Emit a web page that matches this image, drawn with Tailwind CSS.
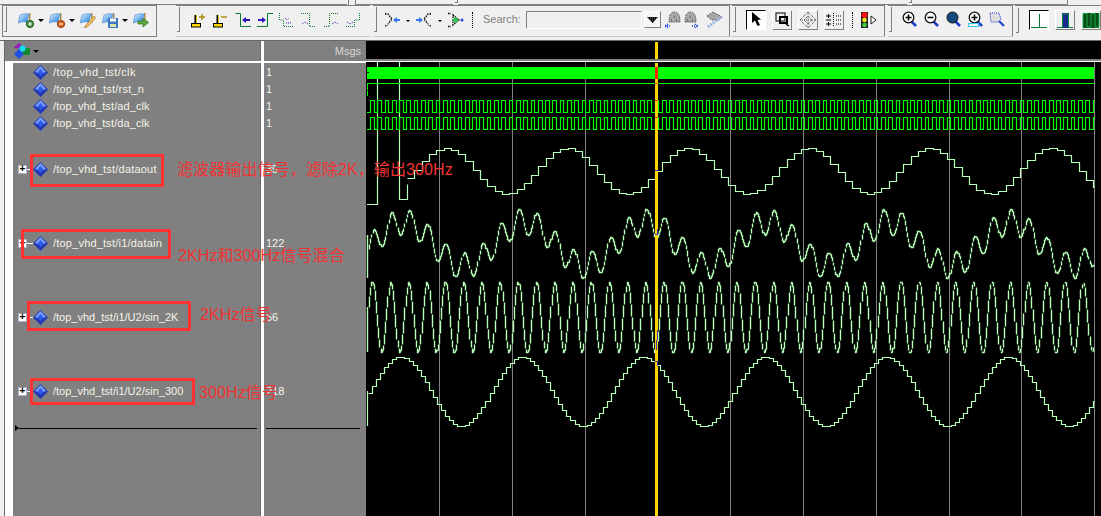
<!DOCTYPE html>
<html lang="zh">
<head>
    <meta charset="UTF-8">
    <title>Wave</title>
    <script src="https://cdn.jsdelivr.net/npm/@tailwindcss/browser@4"></script>
</head>
<body class="bg-[#f0f0f0] overflow-hidden">
<svg class="absolute w-0 h-0">
    <defs>
        <linearGradient id="fl" x1="0" y1="0" x2="1" y2="1"><stop offset="0" stop-color="#eaf6ff"/><stop offset="0.5" stop-color="#7ab8f0"/><stop offset="1" stop-color="#2a70d0"/></linearGradient>
        <symbol id="flag" viewBox="0 0 16 16"><path d="M2 3 Q6 1 11 2 L9 10 Q5 9 0 11Z" fill="url(#fl)" stroke="#3a7ac8" stroke-width="0.500"/><path d="M11 1 L12.500 1 L12.500 11 L11 11Z" fill="#a88c58"/></symbol>
        <symbol id="dia" viewBox="0 0 15 15"><path d="M7.500 0 15 7.500 7.500 15 0 7.500Z" fill="#2238b8"/><path d="M7.500 1 13 7 7.500 9 2 7Z" fill="#7aa0f8"/><path d="M7.500 4 10.500 7.500 7.500 11 4.500 7.500Z" fill="#2f5cf0"/></symbol>
        <symbol id="glass" viewBox="0 0 15 17"><path d="M9 10 14 15" stroke="#1d3fc8" stroke-width="2.600"/><circle cx="6.500" cy="6.500" r="5.300" fill="#fff" stroke="#111" stroke-width="1.300"/></symbol>
    </defs>
</svg>

<div class="relative w-[1101px] h-[516px] overflow-hidden font-['Liberation_Sans',sans-serif] text-[11px]">
    <!-- upper toolbar bottoms -->
    <div class="flex h-[5px]">
        <div class="w-[347px] h-[5px] border-b border-[#808080]"></div>
        <div class="w-[8px] ml-[1px] h-[5px] border-x border-[#808080]"></div>
        <div class="w-[97px] h-[5px] border-b border-[#808080]"></div>
        <div class="w-[3px] ml-[2px] h-[3px] border-r border-b border-[#808080]"></div>
        <div class="w-[449px] h-[5px] border-b border-[#808080]"></div>
        <div class="w-[3px] ml-[2px] h-[3px] border-r border-b border-[#808080]"></div>
        <div class="w-[156px] h-[5px] border-b border-r border-[#808080]"></div>
    </div>

    <!-- toolbars -->
    <div class="flex h-[32px] pl-[2px]">
        <div class="flex items-center shrink-0 w-[155px] pb-[3px] border border-[#808080]">
            <div class="ml-[1px] w-[3px] h-[25px] border-r border-b border-[#808080] shrink-0"></div>
            <svg class="ml-[11px] w-[16px] h-[16px] shrink-0" viewBox="0 0 16 16"><use href="#flag"/><circle cx="12" cy="12" r="3.600" fill="#3f8f3a" stroke="#24551f"/><path d="M10 12h4M12 10v4" stroke="#fff"/></svg>
            <span class="ml-[4px] w-0 h-0 border-x-[3px] border-t-[3px] border-x-transparent border-t-black mt-[1px] shrink-0"></span>
            <svg class="ml-[5px] w-[16px] h-[16px] shrink-0" viewBox="0 0 16 16"><use href="#flag"/><circle cx="12" cy="12" r="3.600" fill="#e0641e" stroke="#8c3b10"/><path d="M10 12h4" stroke="#fff"/></svg>
            <span class="ml-[4px] w-0 h-0 border-x-[3px] border-t-[3px] border-x-transparent border-t-black mt-[1px] shrink-0"></span>
            <svg class="ml-[5px] w-[16px] h-[16px] shrink-0" viewBox="0 0 16 16"><use href="#flag"/><path d="M14 4 6 13 4 16 8 14.500 15.500 6Z" fill="#f0c060" stroke="#a87a28" stroke-width="0.700"/></svg>
            <svg class="ml-[6px] w-[16px] h-[16px] shrink-0" viewBox="0 0 16 16"><use href="#flag"/><rect x="6" y="6" width="10" height="10" fill="#3d78c8"/><rect x="8" y="6.500" width="6" height="3" fill="#fff"/><rect x="8" y="12" width="6" height="3" fill="#d8e4a0"/></svg>
            <span class="ml-[4px] w-0 h-0 border-x-[3px] border-t-[3px] border-x-transparent border-t-black mt-[1px] shrink-0"></span>
            <svg class="ml-[5px] w-[16px] h-[16px] shrink-0" viewBox="0 0 16 16"><use href="#flag"/><path d="M5 9h5V6l5.500 4.500L10 15v-3H5Z" fill="#5fa83f" stroke="#386d28" stroke-width="0.700"/></svg>
        </div>
        <div class="flex items-center shrink-0 ml-[19px] w-[194px] pb-[3px] border-t border-b border-[#c8c8c8] border-t-[#808080]">
            <div class="ml-[1px] w-[3px] h-[25px] border-r border-b border-[#808080] shrink-0"></div>
            <svg class="ml-[11px] w-[15px] h-[16px] shrink-0" viewBox="0 0 15 16"><path d="M4.500 3v8" stroke="#000" stroke-width="2"/><path d="M5.500 3v8" stroke="#e8c000" stroke-width="1"/><rect x="0.500" y="11.500" width="9" height="3.500" fill="#ffd800" stroke="#000"/><path d="M8 5h6M11 2v6" stroke="#a88800" stroke-width="1.400"/></svg>
            <svg class="ml-[7px] w-[15px] h-[16px] shrink-0" viewBox="0 0 15 16"><path d="M4.500 3v8" stroke="#000" stroke-width="2"/><path d="M5.500 3v8" stroke="#e8c000" stroke-width="1"/><rect x="0.500" y="11.500" width="9" height="3.500" fill="#ffd800" stroke="#000"/><path d="M8 5h6" stroke="#a88800" stroke-width="1.400"/></svg>
            <svg class="ml-[7px] w-[16px] h-[16px] shrink-0" viewBox="0 0 16 16"><path d="M0.500 1.500H5.500V14.500H16" fill="none" stroke="#0a7a28"/><path d="M7 8 11 5v2h4v2h-4v2Z" fill="#2a18b8"/></svg>
            <svg class="ml-[6px] w-[16px] h-[16px] shrink-0" viewBox="0 0 16 16"><path d="M0 14.500H10.500V1.500H16" fill="none" stroke="#0a7a28"/><path d="M9 8 5 5v2H1v2h4v2Z" fill="#2a18b8"/></svg>
            <svg class="ml-[6px] w-[15px] h-[16px] shrink-0" viewBox="0 0 15 16"><path d="M0.500 1V8H4.500V14.500H15" fill="none" stroke="#0a7a28" stroke-dasharray="1 1"/><path d="M6 6l2 2 2-2M7 11h6" fill="none" stroke="#2a18b8" stroke-dasharray="1 1"/></svg>
            <svg class="ml-[7px] w-[15px] h-[16px] shrink-0" viewBox="0 0 15 16"><path d="M0 1.500H8.500V14.500H15" fill="none" stroke="#0a7a28" stroke-dasharray="1 1"/><path d="M1 12l3-2 3 2" fill="none" stroke="#2a18b8" stroke-dasharray="1 1"/></svg>
            <svg class="ml-[8px] w-[15px] h-[16px] shrink-0" viewBox="0 0 15 16"><path d="M0 14.500H5.500V1.500H15" fill="none" stroke="#0a7a28" stroke-dasharray="1 1"/><path d="M8 12l3-2 3 2" fill="none" stroke="#2a18b8" stroke-dasharray="1 1"/></svg>
            <svg class="ml-[7px] w-[15px] h-[16px] shrink-0" viewBox="0 0 15 16"><path d="M0 14.500H8.500V8H13.500V1" fill="none" stroke="#0a7a28" stroke-dasharray="1 1"/><path d="M1 10l3 2 3-2" fill="none" stroke="#2a18b8" stroke-dasharray="1 1"/></svg>
        </div>
        <div class="flex items-center shrink-0 ml-[3px] w-[357px] pb-[3px] border-t border-b border-r border-[#808080] border-b-[#c8c8c8]">
            <div class="ml-[1px] w-[3px] h-[25px] border-r border-b border-[#808080] shrink-0"></div>
            <svg class="ml-[8px] w-[15px] h-[16px] shrink-0" viewBox="0 0 15 16"><path d="M0 2h3l4 5-4 5M0 14l3-1" fill="none" stroke="#000" stroke-width="1.300" stroke-dasharray="1.500 1"/><path d="M8 8l4-3v2h3v2h-3v2Z" fill="#3a7af0"/></svg>
            <span class="ml-[6px] w-0 h-0 border-x-[2px] border-t-[2px] border-x-transparent border-t-black mt-[2px] shrink-0"></span>
            <svg class="ml-[6px] w-[15px] h-[16px] shrink-0" viewBox="0 0 15 16"><path d="M15 2h-3L8 7l4 5M15 14l-3-1" fill="none" stroke="#000" stroke-width="1.300" stroke-dasharray="1.500 1"/><path d="M7 8 3 5v2H0v2h3v2Z" fill="#3a7af0"/></svg>
            <span class="ml-[7px] w-0 h-0 border-x-[2px] border-t-[2px] border-x-transparent border-t-black mt-[2px] shrink-0"></span>
            <svg class="ml-[6px] w-[16px] h-[16px] shrink-0" viewBox="0 0 16 16"><path d="M0 1.500h3M0 14.500h3M5 3 11 8 5 13Z" fill="none" stroke="#000" stroke-width="1.300" stroke-dasharray="1.500 1"/><path d="M4 8l3.500-3L11 8l-3.500 3Z" fill="#30c050"/><circle cx="14" cy="8" r="1.500" fill="#2040e0"/></svg>
            <div class="ml-[8px] w-[1px] h-[16px] border-l border-dotted border-black shrink-0"></div>
            <span class="ml-[10px] w-[37px] text-[#808080] shrink-0">Search:</span>
            <div class="ml-[6px] w-[116px] h-[18px] bg-[#f0f0f0] border border-[#808080] border-r-white border-b-white shrink-0"></div>
            <div class="ml-[2px] w-[17px] h-[17px] flex items-center justify-center bg-white/40 border border-white border-r-[#808080] border-b-[#808080] shrink-0"><svg class="w-[11px] h-[6px]" viewBox="0 0 11 6"><path d="M0 0h11L5.500 6Z" fill="#000"/><path d="M1 1h9M3 3h5" stroke="#888" stroke-dasharray="1 1"/></svg></div>
            <svg class="ml-[4px] w-[18px] h-[18px] shrink-0" viewBox="0 0 18 18"><path d="M4 11Q4 1 9.500 1T15 11Z" fill="#a8a8a8" stroke="#333" stroke-dasharray="1 1"/><path d="M9 6h2M6 9h2M11 9h2" stroke="#333" stroke-dasharray="1 1"/><path d="M0 15h6M3 13l-3 2 3 2" fill="none" stroke="#1d3fe0" stroke-dasharray="1 1" stroke-width="1.500"/></svg>
            <svg class="w-[18px] h-[18px] shrink-0" viewBox="0 0 18 18"><path d="M2 11Q2 1 7.500 1T13 11Z" fill="#a8a8a8" stroke="#333" stroke-dasharray="1 1"/><path d="M7 6h2M4 9h2M9 9h2" stroke="#333" stroke-dasharray="1 1"/><path d="M9 15h6M12 13l3 2-3 2" fill="none" stroke="#1d3fe0" stroke-dasharray="1 1" stroke-width="1.500"/></svg>
            <svg class="ml-[5px] w-[17px] h-[18px] shrink-0" viewBox="0 0 17 18"><path d="M1 5 7 1l9 5-3 3H6Z" fill="#a8a8a8" stroke="#333" stroke-dasharray="1 1"/><path d="M2 16 15 6" stroke="#9ab8e8" stroke-width="3" stroke-dasharray="2 1"/></svg>
        </div>
        <div class="flex items-center shrink-0 ml-[2px] w-[153px] pb-[3px] border-t border-b border-r border-[#808080] border-b-[#c8c8c8]">
            <div class="ml-[1px] w-[3px] h-[25px] border-r border-b border-[#808080] shrink-0"></div>
            <div class="ml-[10px] w-[20px] h-[20px] flex items-center justify-center bg-white border border-black border-r-white border-b-white shrink-0"><svg class="w-[12px] h-[15px]" viewBox="0 0 12 15"><path d="M2 0V11L5 8.500 7.500 14 10 13 7.500 8 11 7.500Z" fill="#000"/></svg></div>
            <div class="ml-[6px] w-[20px] h-[20px] flex items-center justify-center border border-white border-r-[#808080] border-b-[#808080] shrink-0"><svg class="w-[15px] h-[15px]" viewBox="0 0 15 15"><rect x="1" y="1" width="9" height="8" fill="none" stroke="#000"/><rect x="5" y="5" width="7" height="6" fill="none" stroke="#000" stroke-width="2"/><path d="M11 12l3 2" stroke="#000" stroke-width="1.500"/></svg></div>
            <div class="ml-[6px] w-[20px] h-[20px] flex items-center justify-center border border-white border-r-[#808080] border-b-[#808080] shrink-0"><svg class="w-[16px] h-[16px]" viewBox="0 0 16 16"><path d="M8 0 16 8 8 16 0 8ZM8 4 12 8 8 12 4 8Z" fill="none" stroke="#333" stroke-dasharray="1 1"/><path d="M0 8h16M8 0v16" stroke="#555" stroke-dasharray="1 1"/></svg></div>
            <div class="ml-[6px] w-[20px] h-[20px] flex items-center justify-center border border-white border-r-[#808080] border-b-[#808080] shrink-0"><svg class="w-[16px] h-[14px]" viewBox="0 0 16 14"><path d="M0 3h5M0 7h5M0 11h5M2.500 1v4M2.500 9v4" stroke="#000"/><path d="M7.500 0v14M10 3h5M10 7h5M10 11h5" stroke="#000" stroke-dasharray="1 1"/></svg></div>
            <div class="ml-[8px] w-[1px] h-[16px] border-l border-dotted border-black shrink-0"></div>
            <svg class="ml-[8px] w-[16px] h-[18px] shrink-0" viewBox="0 0 16 18"><rect x="0" y="1" width="7" height="16" fill="#222"/><circle cx="3.500" cy="4" r="3" fill="#f01010"/><circle cx="3.500" cy="9" r="2.300" fill="#f0e020"/><circle cx="3.500" cy="14" r="2.300" fill="#40d040"/><path d="M10 5V13L15 9Z" fill="#fff" stroke="#222"/></svg>
        </div>
        <div class="flex items-center shrink-0 ml-[3px] w-[125px] pb-[3px] border-t border-b border-r border-[#808080] border-b-[#c8c8c8]">
            <div class="ml-[1px] w-[3px] h-[25px] border-r border-b border-[#808080] shrink-0"></div>
            <svg class="ml-[10px] w-[15px] h-[17px] shrink-0" viewBox="0 0 15 17"><use href="#glass"/><path d="M3.500 6.500h6M6.500 3.500v6" stroke="#000" stroke-width="1.600"/></svg>
            <svg class="ml-[7px] w-[15px] h-[17px] shrink-0" viewBox="0 0 15 17"><use href="#glass"/><path d="M3.500 6.500h6" stroke="#000" stroke-width="1.600"/></svg>
            <svg class="ml-[7px] w-[15px] h-[17px] shrink-0" viewBox="0 0 15 17"><path d="M9 10 14 15" stroke="#1d3fc8" stroke-width="2.600"/><circle cx="6.500" cy="6.500" r="5.500" fill="#124a80" stroke="#111"/></svg>
            <svg class="ml-[7px] w-[15px] h-[17px] shrink-0" viewBox="0 0 15 17"><use href="#glass"/><path d="M3.500 6.500h6M6.500 3.500v6" stroke="#000" stroke-width="1.600"/><rect x="0.500" y="12.500" width="10" height="3" fill="none" stroke="#30c8f0"/></svg>
            <svg class="ml-[6px] w-[16px] h-[17px] shrink-0" viewBox="0 0 16 17"><path d="M1 2h9l2 6-3 3H2Z" fill="#ddd" stroke="#2030d0" stroke-dasharray="1 1"/><path d="M10 10l5 5" stroke="#2a50d0" stroke-width="2.400"/></svg>
        </div>
        <div class="flex items-center shrink-0 ml-[2px] w-[86px] pb-[3px] border-t border-[#808080]">
            <div class="ml-[1px] w-[3px] h-[25px] border-r border-b border-[#808080] shrink-0"></div>
            <div class="ml-[10px] w-[20px] h-[20px] flex items-end justify-center bg-white border border-black border-r-white border-b-white shrink-0"><svg class="w-[18px] h-[18px]" viewBox="0 0 18 18"><path d="M1 16.500H17M9.500 3V16" stroke="#0a7a38"/></svg></div>
            <div class="ml-[6px] w-[20px] h-[20px] flex items-end justify-center border border-white border-r-[#808080] border-b-[#808080] shrink-0"><svg class="w-[18px] h-[18px]" viewBox="0 0 18 18"><rect x="6" y="2" width="7" height="15" fill="#1c2a90"/><path d="M1 16.500H6.500V3H12.500V16.500H17" fill="none" stroke="#0a8a38"/></svg></div>
            <div class="ml-[6px] w-[20px] h-[20px] flex items-end justify-center border border-white border-r-[#808080] border-b-[#808080] shrink-0"><svg class="w-[18px] h-[18px]" viewBox="0 0 18 18"><rect x="1" y="2" width="16" height="15" fill="#0a4a18"/><path d="M1 16.500V2.500H5V16H9V2.500H13V16H17V2" fill="none" stroke="#10b040"/></svg></div>
        </div>
    </div>

    <!-- wave window -->
    <div class="flex h-[476px] mt-[3px] pl-[4px] border-t border-[#696969]">
        <div class="flex flex-col shrink-0 w-[362px] bg-[#808080] border-l border-[#696969] text-[#f4f4e8]">
            <div class="flex h-[20px] shrink-0">
                <div class="flex items-center w-[256px] shrink-0 border-r border-[#696969]">
                    <svg class="ml-[8px] w-[17px] h-[16px] shrink-0" viewBox="0 0 17 16"><path d="M6 0 11 5H1Z" fill="#a020c0" stroke="#701090" stroke-width="0.500"/><rect x="10" y="5" width="7" height="7" fill="#108a30"/><path d="M6 6 11 11 6 16 1 11Z" fill="#1d50e0"/><circle cx="9.500" cy="5.500" r="3" fill="#10e0f0"/></svg>
                    <span class="ml-[3px] w-0 h-0 border-x-[3px] border-t-[3px] border-x-transparent border-t-black mt-[1px]"></span>
                </div>
                <div class="w-[3px] bg-white shrink-0"></div>
                <div class="flex-1 text-right pr-[5px] leading-[20px] text-[#d8d8d8]">Msgs</div>
            </div>
            <div class="h-[2px] shrink-0 bg-white"></div>
            <div class="flex flex-1 min-h-0">
                <div class="w-[8px] bg-white shrink-0"></div>
                <div class="flex flex-col w-[248px] shrink-0 border-r border-[#696969]">
                    <div class="h-[0.500px]"></div>
                    <div class="flex items-center h-[17.200px] pl-[20px]"><svg class="w-[15px] h-[15px] shrink-0"><use href="#dia"/></svg><span class="ml-[5px] tracking-[0.4px]">/top_vhd_tst/clk</span></div>
                    <div class="flex items-center h-[17.200px] pl-[20px]"><svg class="w-[15px] h-[15px] shrink-0"><use href="#dia"/></svg><span class="ml-[5px] tracking-[0.2px]">/top_vhd_tst/rst_n</span></div>
                    <div class="flex items-center h-[17.200px] pl-[20px]"><svg class="w-[15px] h-[15px] shrink-0"><use href="#dia"/></svg><span class="ml-[5px] tracking-[0.1px]">/top_vhd_tst/ad_clk</span></div>
                    <div class="flex items-center h-[17.200px] pl-[20px]"><svg class="w-[15px] h-[15px] shrink-0"><use href="#dia"/></svg><span class="ml-[5px] tracking-[0.1px]">/top_vhd_tst/da_clk</span></div>
                    <div class="flex items-center h-[74px] pl-[5px]">
                        <span class="w-[9px] h-[9px] bg-white border border-[#b0b0c8] flex items-center justify-center text-black text-[10px] leading-none font-bold shrink-0">+</span><span class="w-[6px] h-[1px] bg-white shrink-0"></span><svg class="w-[15px] h-[15px] shrink-0"><use href="#dia"/></svg><span class="ml-[5px] tracking-[0.2px]">/top_vhd_tst/dataout</span>
                    </div>
                    <div class="flex items-center h-[74px] pl-[5px]">
                        <span class="w-[9px] h-[9px] bg-white border border-[#b0b0c8] flex items-center justify-center text-black text-[10px] leading-none font-bold shrink-0">+</span><span class="w-[6px] h-[1px] bg-white shrink-0"></span><svg class="w-[15px] h-[15px] shrink-0"><use href="#dia"/></svg><span class="ml-[5px] tracking-[0.2px]">/top_vhd_tst/i1/datain</span>
                    </div>
                    <div class="flex items-center h-[74px] pl-[5px]">
                        <span class="w-[9px] h-[9px] bg-white border border-[#b0b0c8] flex items-center justify-center text-black text-[10px] leading-none font-bold shrink-0">+</span><span class="w-[6px] h-[1px] bg-white shrink-0"></span><svg class="w-[15px] h-[15px] shrink-0"><use href="#dia"/></svg><span class="ml-[5px]">/top_vhd_tst/i1/U2/sin_2K</span>
                    </div>
                    <div class="flex items-center h-[74px] pl-[5px]">
                        <span class="w-[9px] h-[9px] bg-white border border-[#b0b0c8] flex items-center justify-center text-black text-[10px] leading-none font-bold shrink-0">+</span><span class="w-[6px] h-[1px] bg-white shrink-0"></span><svg class="w-[15px] h-[15px] shrink-0"><use href="#dia"/></svg><span class="ml-[5px]">/top_vhd_tst/i1/U2/sin_300</span>
                    </div>
                    <div class="flex items-center pl-[2px] -mt-[3px]"><span class="w-0 h-0 border-y-[3px] border-l-[4px] border-y-transparent border-l-black"></span><span class="w-[238px] h-[1px] bg-black"></span></div>
                </div>
                <div class="w-[3px] bg-white shrink-0"></div>
                <div class="flex flex-col flex-1 pl-[2px]">
                    <div class="h-[0.500px]"></div>
                    <div class="h-[17.200px] leading-[17px]">1</div>
                    <div class="h-[17.200px] leading-[17px]">1</div>
                    <div class="h-[17.200px] leading-[17px]">1</div>
                    <div class="h-[17.200px] leading-[17px]">1</div>
                    <div class="h-[74px] leading-[74px]">35</div>
                    <div class="h-[74px] leading-[74px]">122</div>
                    <div class="h-[74px] leading-[74px]">56</div>
                    <div class="h-[74px] leading-[74px]">218</div>
                    <div class="h-[1px] bg-black w-[94px]"></div>
                </div>
            </div>
        </div>
        <svg id="wave" class="block shrink-0 w-[735px] h-[475px] bg-black" viewBox="366 41 735 475" fill="none"></svg>
    </div>

    <!-- red annotations on top of the screenshot -->
    <div class="absolute left-[30px] top-[154px] w-[134px] h-[33px] border-[3px] border-[#ff3333]"></div>
    <div class="absolute left-[21px] top-[229px] w-[150px] h-[30px] border-[3px] border-[#ff3333]"></div>
    <div class="absolute left-[27px] top-[301px] w-[164px] h-[30px] border-[3px] border-[#ff3333]"></div>
    <div class="absolute left-[30px] top-[378px] w-[165px] h-[27px] border-[3px] border-[#ff3333]"></div>
    <div class="absolute left-[177px] top-[160px] whitespace-nowrap text-[16px] leading-[20px] tracking-[0.1px] text-[#f23333] font-['Liberation_Sans','Noto_Sans_CJK_SC',sans-serif]">滤波器输出信号，滤除2K，输出300Hz</div>
    <div class="absolute left-[178px] top-[246px] whitespace-nowrap text-[16px] leading-[20px] tracking-[0.1px] text-[#f23333] font-['Liberation_Sans','Noto_Sans_CJK_SC',sans-serif]">2KHz和300Hz信号混合</div>
    <div class="absolute left-[200px] top-[305px] whitespace-nowrap text-[16px] leading-[20px] tracking-[0.1px] text-[#f23333] font-['Liberation_Sans','Noto_Sans_CJK_SC',sans-serif]">2KHz信号</div>
    <div class="absolute left-[199px] top-[383px] whitespace-nowrap text-[16px] leading-[20px] tracking-[0.1px] text-[#f23333] font-['Liberation_Sans','Noto_Sans_CJK_SC',sans-serif]">300Hz信号</div>
</div>

<script>
    const wave = document.getElementById('wave');
    const GREEN = '#00ff00';
    const PALE = '#b8ffb8';
    const END = 1094;
    const TWO_PI = Math.PI * 2;

    function px(v) { return Math.round(v) + 0.5; }

    function add(d, color, width) {
        const p = document.createElementNS('http://www.w3.org/2000/svg', 'path');
        p.setAttribute('d', d);
        p.setAttribute('stroke', color);
        p.setAttribute('stroke-width', width);
        wave.appendChild(p);
    }

    function rect(x, y, w, h, color) {
        const r = document.createElementNS('http://www.w3.org/2000/svg', 'rect');
        r.setAttribute('x', x); r.setAttribute('y', y);
        r.setAttribute('width', w); r.setAttribute('height', h);
        r.setAttribute('fill', color);
        wave.appendChild(r);
    }

    // square clock between two levels
    function clock(hi, lo) {
        let d = `M367 ${lo + 0.5} H370.5`;
        let level = hi;
        for (let x = 370; x < END; x += 3.65) {
            d += ` V${level + 0.5} H${px(Math.min(x + 3.65, END))}`;
            level = level === hi ? lo : hi;
        }
        return d;
    }

    // sample-and-hold curve
    function stairs(x0, dx, fn) {
        let d = '';
        for (let x = x0; x < END; x += dx) {
            const y = px(fn(x + dx / 2));
            d += `${d ? ' V' : 'M' + px(x) + ' '}${y} H${px(Math.min(x + dx, END))}`;
        }
        return d;
    }

    // steep curves show up broken: one short vertical per sample, flat parts stay joined
    function broken(x0, dx, fn) {
        let d = '';
        let prev = fn(x0);
        for (let x = x0 + dx; x < END; x += dx) {
            const y = fn(x);
            const gap = Math.abs(y - prev) > 4 ? Math.sign(y - prev) : 0;
            d += `M${px(x)} ${Math.round(prev) + 0.5} V${Math.round(y - gap) + 0.5} `;
            if (!gap) d += `H${px(x + dx)} `;
            prev = y;
        }
        return d;
    }

    const sin300 = x => Math.cos(TWO_PI * (x - 401.5) / 121.5);
    const sin2k = x => Math.cos(TWO_PI * (x - 371.7) / 18.22);

    // header and grid
    rect(366, 59, 735, 2, '#808080');
    rect(366, 61, 735, 1, '#ffffff');
    rect(655, 42, 3, 17, '#ffd500');
    for (const x of [439, 512, 585, 730, 803, 876, 949, 1021, 1094]) {
        rect(x, 62, 1, 454, '#808080');
    }

    // dataout, starts from the reset value; the clk band covers it higher up
    add('M367 204.5 H377.5 V62 M399.5 62 V199.5 H407.500 V184.500', PALE, 1.2);
    add(stairs(407, 7.3, x => 171 - 23 * Math.cos(TWO_PI * (x - 447) / 121)), PALE, 1.2);

    // clk, rst_n, ad_clk, da_clk
    rect(367, 67, END - 367, 12, GREEN);
    rect(367, 72, 2, 1, '#000000');
    add(`M367 83.5 H${END}`, GREEN, 1);
    add('M367.5 84 V90 M367.5 91 V96', GREEN, 1);
    add(clock(100, 112), GREEN, 1.2);
    add(clock(117, 129), GREEN, 1.2);

    // datain = both sines mixed
    add('M367.5 278 V235', PALE, 1.4);
    add(broken(368, 1.14, x => 243.5 - 22 * sin300(x - 1) - 13 * sin2k(x - 1)), PALE, 1.4);

    // sin_2K
    add('M367.5 352 V307', PALE, 1.4);
    add(broken(368, 1.14, x => 317 - 35 * sin2k(x)), PALE, 1.4);

    // sin_300
    add('M367.5 426 V391', PALE, 1.2);
    add(stairs(368, 4.05, x => 391.5 - 34.5 * sin300(x)), PALE, 1.2);

    // cursor
    rect(655, 63, 3, 453, '#ffd500');
    rect(655, 67, 3, 12, '#ff2000');
    rect(655, 83, 3, 1, '#ff2000');
    rect(655, 100, 3, 1, '#ff2000');
    rect(655, 117, 3, 1, '#ff2000');
    add('M655 170.5 H658', '#4030c0', 1);
    add('M657.5 229 V234 M655 234.5 H658', '#4030c0', 1);
    add('M657.5 330 V340 M656.500 340 V350 M655 361.500 H657.500 V366', '#4030c0', 1);
</script>
</body>
</html>
